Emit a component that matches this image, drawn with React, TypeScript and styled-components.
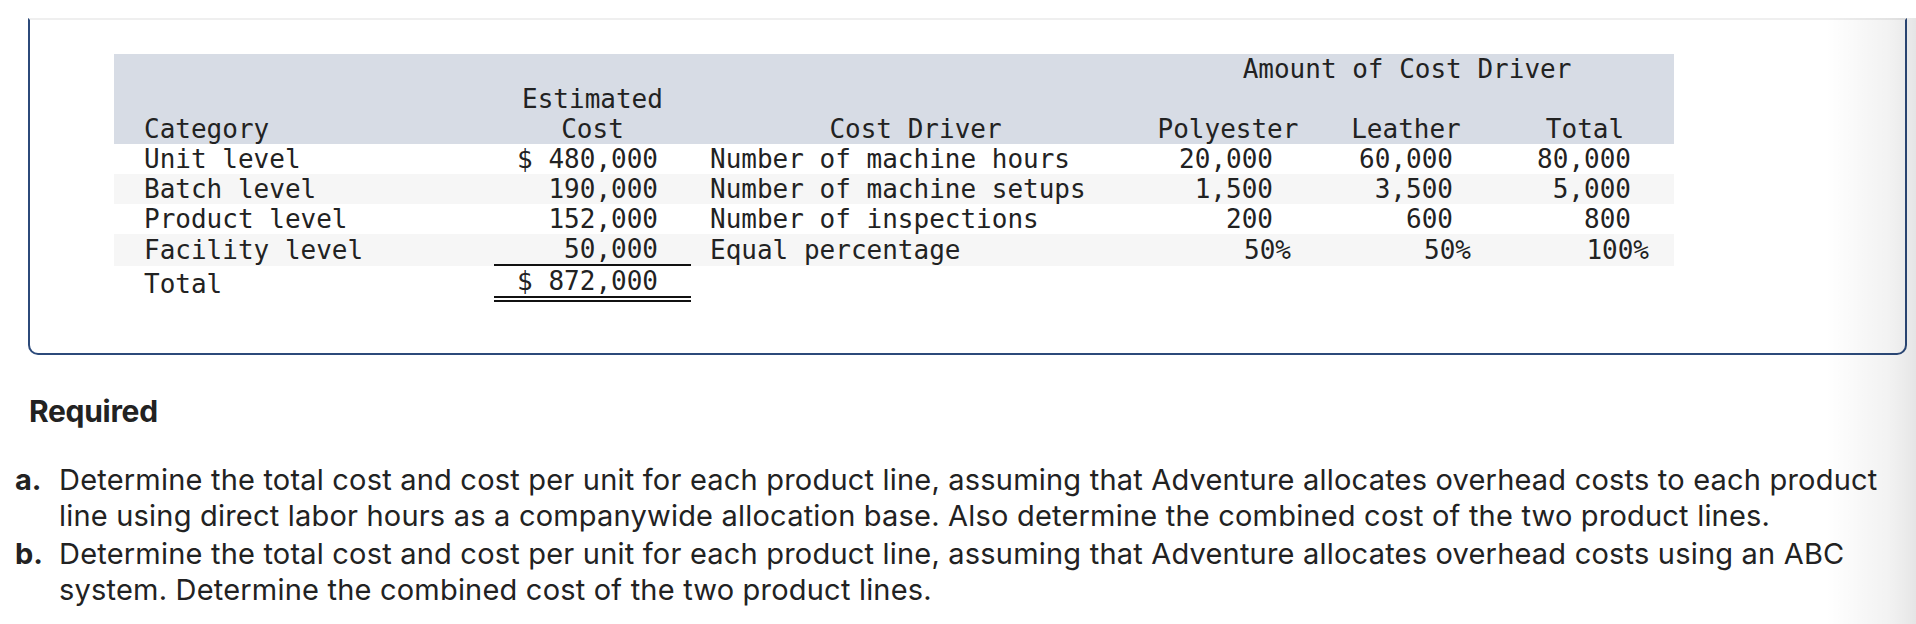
import React from 'react';
import styled, { createGlobalStyle } from 'styled-components';

const GlobalStyle = createGlobalStyle`
  html, body {
    margin: 0;
    padding: 0;
    background: #fff;
  }
  body {
    font-family: Inter, "Open Sans", "Liberation Sans", sans-serif;
    color: #222;
    overflow: hidden;
  }
`;

const Page = styled.div`
  position: relative;
  width: 1916px;
  height: 624px;
`;

const Frame = styled.div`
  margin: 18px 9px 0 28px;
  border: 2px solid #2c4a7a;
  border-top: 2px solid #efefef;
  border-radius: 0 0 10px 10px;
  padding: 34px 0 51px 84px;
`;

const Table = styled.table`
  border-collapse: separate;
  border-spacing: 0;
  table-layout: fixed;
  width: 1560px;
  font-family: "DejaVu Sans Mono", "Liberation Mono", monospace;
  font-size: 26px;
  line-height: 30px;
  color: #222;
`;

const HeadRow = styled.tr<{ $tall?: boolean }>`
  background: #d7dce5;
  height: ${(p) => (p.$tall ? '60px' : '30px')};
`;

const Th = styled.th<{ $align?: 'left' | 'center'; $top?: boolean }>`
  font-weight: normal;
  padding: 0;
  vertical-align: ${(p) => (p.$top ? 'top' : 'bottom')};
  text-align: ${(p) => p.$align ?? 'center'};
  padding-left: ${(p) => (p.$align === 'left' ? '30px' : '0')};
`;

const BodyRow = styled.tr<{ $shade?: boolean }>`
  background: ${(p) => (p.$shade ? '#f6f6f6' : 'transparent')};
  height: 30px;
`;

const LabelCell = styled.td`
  padding: 0 0 0 30px;
  white-space: nowrap;
`;

const CostCell = styled.td<{ $rule?: 'single' | 'double' }>`
  padding: 0 33px 0 0;
  text-align: right;
  white-space: pre;
  border-bottom: ${(p) =>
    p.$rule === 'single'
      ? '2px solid #111'
      : p.$rule === 'double'
        ? '6px double #111'
        : 'none'};
`;

const DriverCell = styled.td`
  padding: 0 0 0 19px;
  white-space: nowrap;
`;

const NumCell = styled.td<{ $pct?: boolean }>`
  padding: 0 ${(p) => (p.$pct ? '25px' : '43px')} 0 0;
  text-align: right;
`;

const Required = styled.h2`
  margin: 38px 0 0 29px;
  font-weight: 700;
  font-size: 30px;
  line-height: 36px;
  letter-spacing: -0.3px;
  color: #222;
`;

const Steps = styled.ol`
  list-style: none;
  margin: 33px 0 0 15px;
  padding: 0;
  display: flex;
  flex-direction: column;
  gap: 2px;
`;

const Step = styled.li`
  display: grid;
  grid-template-columns: 44px 1fr;
  font-size: 29px;
  line-height: 36px;
  letter-spacing: 0.2px;
  color: #222;
  white-space: nowrap;
`;

const StepMark = styled.span`
  font-weight: 700;
  letter-spacing: 0;
`;

const EdgeShade = styled.div`
  position: absolute;
  top: 0;
  right: 0;
  bottom: 0;
  width: 90px;
  pointer-events: none;
  background: linear-gradient(
    to right,
    rgba(0, 0, 0, 0) 0%,
    rgba(0, 0, 0, 0.05) 70%,
    rgba(0, 0, 0, 0.08) 88%,
    rgba(0, 0, 0, 0.1) 100%
  );
`;

type Row = {
  category: string;
  cost: string;
  driver: string;
  polyester: string;
  leather: string;
  total: string;
  pct?: boolean;
};

const rows: Row[] = [
  { category: 'Unit level', cost: '$ 480,000', driver: 'Number of machine hours', polyester: '20,000', leather: '60,000', total: '80,000' },
  { category: 'Batch level', cost: '190,000', driver: 'Number of machine setups', polyester: '1,500', leather: '3,500', total: '5,000' },
  { category: 'Product level', cost: '152,000', driver: 'Number of inspections', polyester: '200', leather: '600', total: '800' },
  { category: 'Facility level', cost: '50,000', driver: 'Equal percentage', polyester: '50%', leather: '50%', total: '100%', pct: true },
];

export default function App() {
  return (
    <Page>
      <GlobalStyle />
      <Frame>
        <Table>
          <colgroup>
            <col style={{ width: 380 }} />
            <col style={{ width: 197 }} />
            <col style={{ width: 449 }} />
            <col style={{ width: 176 }} />
            <col style={{ width: 180 }} />
            <col style={{ width: 178 }} />
          </colgroup>
          <thead>
            <HeadRow>
              <Th rowSpan={2} $align="left">Category</Th>
              <Th rowSpan={2}>
                Estimated
                <br />
                Cost
              </Th>
              <Th rowSpan={2}>Cost Driver</Th>
              <Th colSpan={3} $top>
                Amount of Cost Driver
              </Th>
            </HeadRow>
            <HeadRow $tall>
              <Th>Polyester</Th>
              <Th>Leather</Th>
              <Th>Total</Th>
            </HeadRow>
          </thead>
          <tbody>
            {rows.map((r, i) => (
              <BodyRow key={r.category} $shade={i % 2 === 1}>
                <LabelCell>{r.category}</LabelCell>
                <CostCell $rule={i === rows.length - 1 ? 'single' : undefined}>{r.cost}</CostCell>
                <DriverCell>{r.driver}</DriverCell>
                <NumCell $pct={r.pct}>{r.polyester}</NumCell>
                <NumCell $pct={r.pct}>{r.leather}</NumCell>
                <NumCell $pct={r.pct}>{r.total}</NumCell>
              </BodyRow>
            ))}
            <BodyRow>
              <LabelCell>Total</LabelCell>
              <CostCell $rule="double">$ 872,000</CostCell>
              <td />
              <td />
              <td />
              <td />
            </BodyRow>
          </tbody>
        </Table>
      </Frame>
      <Required>Required</Required>
      <Steps>
        <Step>
          <StepMark>a.</StepMark>
          <span>
            Determine the total cost and cost per unit for each product line, assuming that Adventure allocates overhead costs to each product
            <br />
            line using direct labor hours as a companywide allocation base. Also determine the combined cost of the two product lines.
          </span>
        </Step>
        <Step>
          <StepMark>b.</StepMark>
          <span>
            Determine the total cost and cost per unit for each product line, assuming that Adventure allocates overhead costs using an ABC
            <br />
            system. Determine the combined cost of the two product lines.
          </span>
        </Step>
      </Steps>
      <EdgeShade />
    </Page>
  );
}
